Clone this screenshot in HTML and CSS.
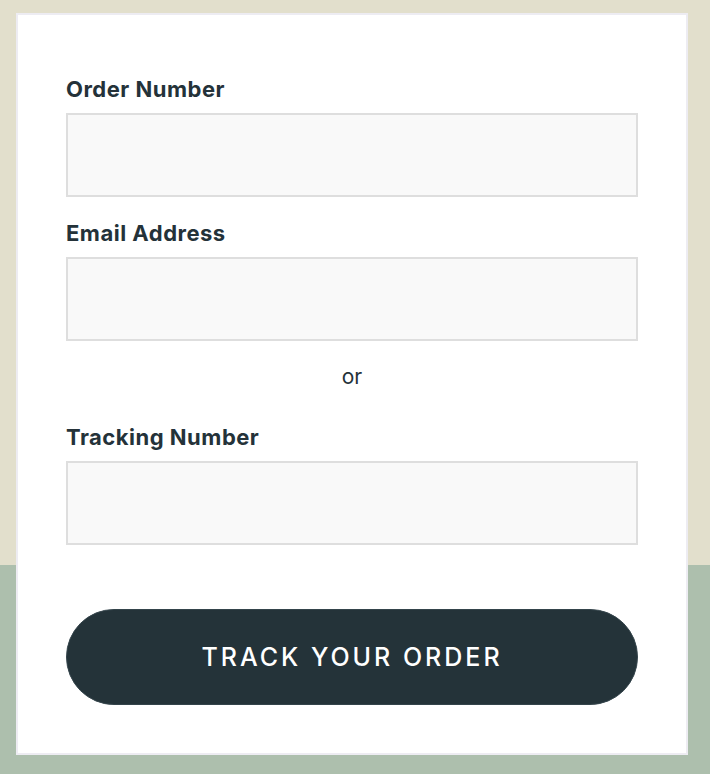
FILE: index.html
```html
<!DOCTYPE html>
<html>
<head>
<meta charset="utf-8">
<link rel="stylesheet" href="styles.css">
</head>
<body>
<div class="page">
  <form class="card">
    <label class="label">Order Number</label>
    <div class="field"></div>
    <label class="label label-2">Email Address</label>
    <div class="field"></div>
    <div class="or">or</div>
    <label class="label">Tracking Number</label>
    <div class="field"></div>
    <div class="button">TRACK YOUR ORDER</div>
  </form>
</div>
</body>
</html>
```
FILE: styles.css
```css
html, body {
  margin: 0;
  padding: 0;
}
body {
  width: 710px;
  height: 774px;
  overflow: hidden;
  background: linear-gradient(to bottom, #e2dfcc 0, #e2dfcc 565px, #adbfad 565px, #adbfad 100%);
  font-family: "Inter", "Liberation Sans", sans-serif;
  color: #243239;
}
.page {
  padding: 13px 22px 0 16px;
}
.card {
  box-sizing: border-box;
  width: 672px;
  height: 742px;
  background: #ffffff;
  border: 2px solid #edecf2;
  padding: 61px 48px 0 48px;
  display: flex;
  flex-direction: column;
}
.label {
  display: block;
  font-size: 22px;
  line-height: 26px;
  font-weight: 700;
  margin-bottom: 11px;
  letter-spacing: 0.5px;
}
.label-2 {
  margin-top: 23px;
}
.field {
  box-sizing: border-box;
  height: 84px;
  background: #f9f9f9;
  border: 2px solid #dedede;
}
.or {
  text-align: center;
  font-size: 21px;
  line-height: 26px;
  margin: 23px 0 34px;
}
.button {
  box-sizing: border-box;
  margin-top: 64px;
  height: 96px;
  border-radius: 48px;
  background: #243339;
  border: 1px solid #34444b;
  color: #ffffff;
  font-size: 25px;
  letter-spacing: 3px;
  font-weight: 500;
  display: flex;
  align-items: center;
  justify-content: center;
}
```
